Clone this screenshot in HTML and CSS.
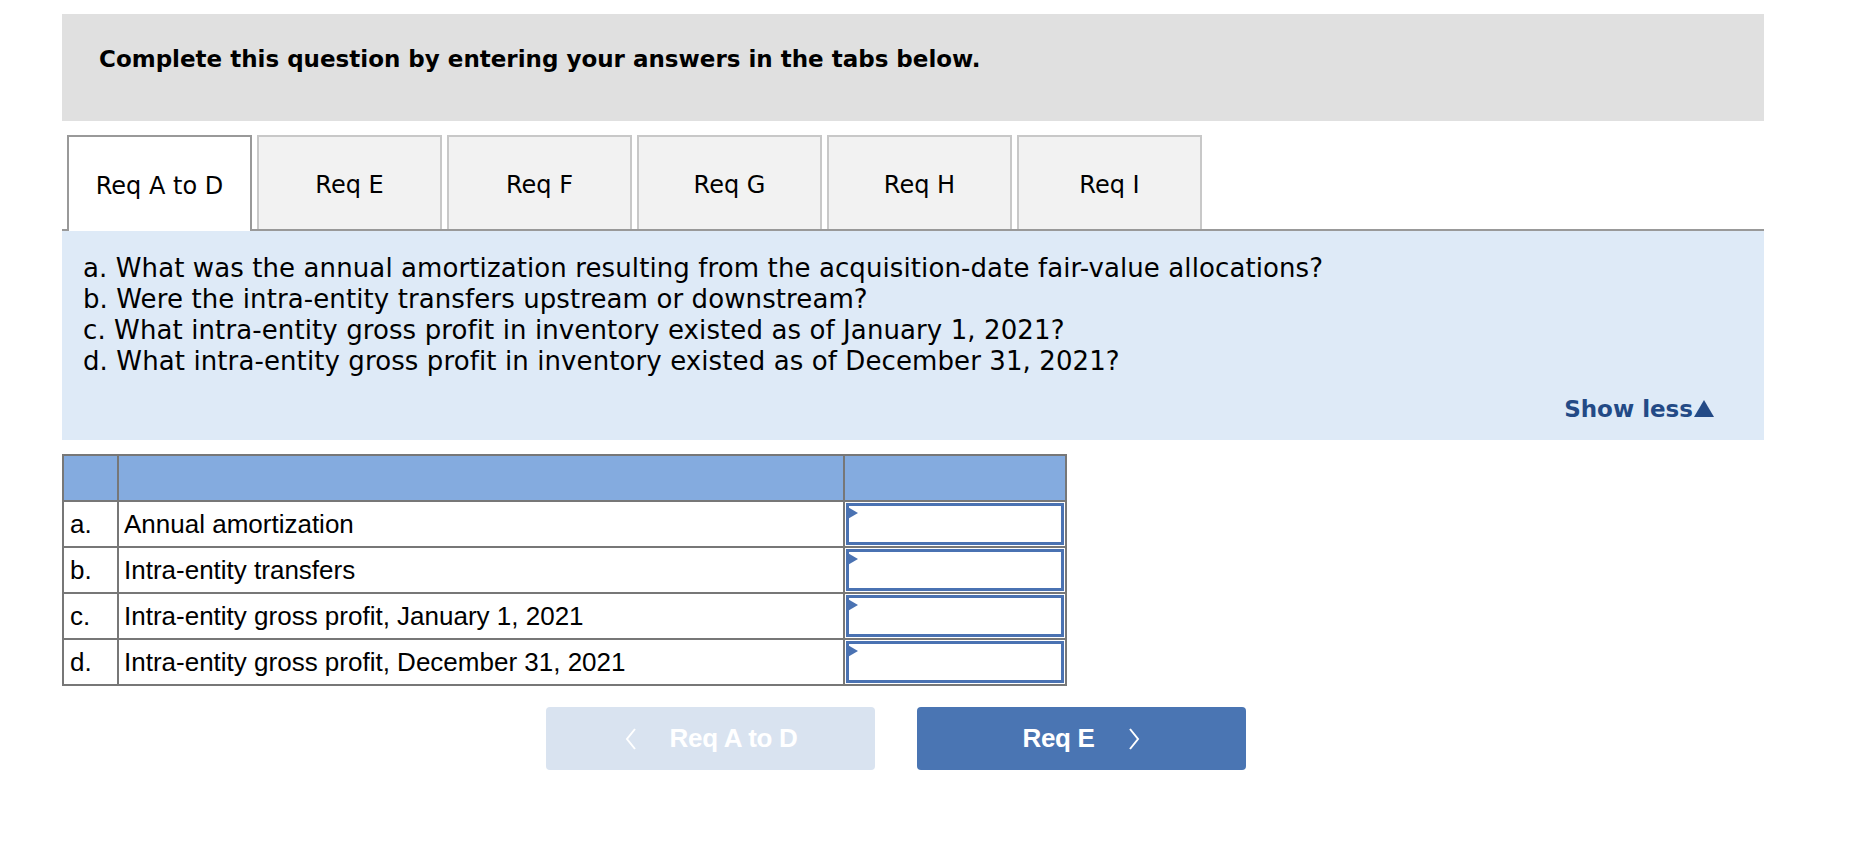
FILE: index.html
```html
<!DOCTYPE html>
<html lang="en">
<head>
    <meta charset="UTF-8">
    <meta name="viewport" content="width=device-width, initial-scale=1.0">
    <title>Req A to D</title>
    <link rel="stylesheet" href="styles.css">
</head>
<body>
    <div class="wrap">

        <div class="top-box">
            <p class="top-text">Complete this question by entering your answers in the tabs below.</p>
        </div>

        <div class="tabs">
            <div class="tab active">Req A to D</div>
            <div class="tab">Req E</div>
            <div class="tab">Req F</div>
            <div class="tab">Req G</div>
            <div class="tab">Req H</div>
            <div class="tab">Req I</div>
        </div>

        <div class="question">
            <p class="q-line">a. What was the annual amortization resulting from the acquisition-date fair-value allocations?</p>
            <p class="q-line">b. Were the intra-entity transfers upstream or downstream?</p>
            <p class="q-line">c. What intra-entity gross profit in inventory existed as of January 1, 2021?</p>
            <p class="q-line">d. What intra-entity gross profit in inventory existed as of December 31, 2021?</p>
            <div class="show-row">
                <span class="show-less">Show less<span class="tri"></span></span>
            </div>
        </div>

        <table class="answers">
            <colgroup>
                <col class="c-letter">
                <col class="c-label">
                <col class="c-input">
            </colgroup>
            <tr class="head">
                <th></th>
                <th></th>
                <th></th>
            </tr>
            <tr>
                <td class="letter">a.</td>
                <td class="label">Annual amortization</td>
                <td class="inp"><div class="box"><span class="flag"></span></div></td>
            </tr>
            <tr>
                <td class="letter">b.</td>
                <td class="label">Intra-entity transfers</td>
                <td class="inp"><div class="box"><span class="flag"></span></div></td>
            </tr>
            <tr>
                <td class="letter">c.</td>
                <td class="label">Intra-entity gross profit, January 1, 2021</td>
                <td class="inp"><div class="box"><span class="flag"></span></div></td>
            </tr>
            <tr>
                <td class="letter">d.</td>
                <td class="label">Intra-entity gross profit, December 31, 2021</td>
                <td class="inp"><div class="box"><span class="flag"></span></div></td>
            </tr>
        </table>

        <div class="nav">
            <button class="nav-btn prev">
                <svg class="chev" width="14" height="22" viewBox="0 0 14 22"><polyline points="11,1 3,11 11,21" fill="none" stroke="#fff" stroke-width="2"/></svg>
                <span>Req A to D</span>
            </button>
            <button class="nav-btn next">
                <span>Req E</span>
                <svg class="chev" width="14" height="22" viewBox="0 0 14 22"><polyline points="3,1 11,11 3,21" fill="none" stroke="#fff" stroke-width="2"/></svg>
            </button>
        </div>

    </div>
</body>
</html>
```

FILE: styles.css
```css
body{
    margin: 0;
    background-color: #fff;
    color: #000;
    font-family: "DejaVu Sans", Verdana, sans-serif;
}
.wrap{
    margin: 14px 0 0 62px;
    width: 1702px;
}

.top-box{
    background-color: #e0e0e0;
    height: 107px;
    box-sizing: border-box;
    padding: 30px 37px 0;
}
.top-text{
    margin: 0;
    font-size: 23px;
    font-weight: 700;
    line-height: 30px;
}

.tabs{
    display: flex;
    align-items: flex-end;
    gap: 5px;
    margin-top: 14px;
    padding-left: 5px;
    border-bottom: 2px solid #999;
}
.tab{
    width: 185px;
    height: 94px;
    box-sizing: border-box;
    border: 2px solid #c8c8c8;
    border-bottom: none;
    background-color: #f2f2f2;
    display: flex;
    align-items: center;
    justify-content: center;
    font-size: 24px;
    padding-top: 3px;
}
.tab.active{
    height: 96px;
    margin-bottom: -2px;
    border-color: #999;
    background-color: #fff;
}

.question{
    background-color: #deeaf7;
    height: 209px;
    box-sizing: border-box;
    padding: 22px 50px 0 21px;
}
.q-line{
    margin: 0;
    font-size: 26px;
    letter-spacing: 0.1px;
    line-height: 31px;
}
.show-row{
    display: flex;
    justify-content: flex-end;
    margin-top: 17px;
}
.show-less{
    color: #234a86;
    font-size: 23px;
    font-weight: 700;
    line-height: 30px;
    display: flex;
    align-items: center;
}
.tri{
    display: inline-block;
    width: 0;
    height: 0;
    margin-left: 1px;
    margin-bottom: 2px;
    border-left: 10px solid transparent;
    border-right: 10px solid transparent;
    border-bottom: 17px solid #234a86;
}

.answers{
    margin-top: 14px;
    border-collapse: collapse;
    table-layout: fixed;
    width: 1003px;
    border: 2px solid #777;
    font-family: "Liberation Sans", Arial, sans-serif;
    font-size: 26px;
}
.c-letter{ width: 55px; }
.c-label{ width: 726px; }
.c-input{ width: 222px; }

.answers td,.answers th{
    border: 2px solid #777;
    height: 44px;
    padding: 0;
}
.head th{
    background-color: #84abdf;
}
.letter{
    padding-left: 6px !important;
}
.label{
    padding-left: 5px !important;
}
.box{
    position: relative;
    margin: 1px;
    height: 42px;
    box-sizing: border-box;
    border: 3px solid #4a72b2;
    background-color: #fff;
}
.flag{
    position: absolute;
    left: -3px;
    top: 0;
    width: 0;
    height: 0;
    border-left: 12px solid #4a72b2;
    border-top: 7px solid transparent;
    border-bottom: 7px solid transparent;
}

.nav{
    display: flex;
    gap: 42px;
    margin-top: 21px;
    padding-left: 484px;
}
.nav-btn{
    width: 329px;
    height: 63px;
    border: none;
    border-radius: 4px;
    color: #fff;
    font-family: "Liberation Sans", Arial, sans-serif;
    font-size: 26px;
    font-weight: 700;
    letter-spacing: -0.3px;
    display: flex;
    align-items: center;
    justify-content: center;
    gap: 32px;
}
.prev{
    background-color: #d9e3f0;
}
.next{
    background-color: #4a75b3;
}
```
